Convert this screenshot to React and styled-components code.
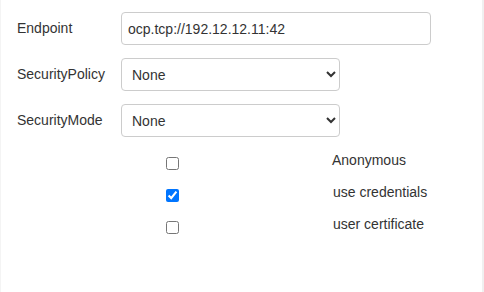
import React, { useState } from 'react'
import styled, { createGlobalStyle } from 'styled-components'

const GlobalStyle = createGlobalStyle`
  html, body {
    margin: 0;
    padding: 0;
    background: #fff;
  }
  * {
    box-sizing: border-box;
  }
`

const Panel = styled.div`
  width: 484px;
  height: 292px;
  padding: 12px 0 0 16px;
  border-left: 1px solid #f4f4f4;
  border-right: 2px solid #f0f0f0;
  font-family: 'Liberation Sans', Arial, sans-serif;
  font-size: 14px;
  color: #333;
  display: flex;
  flex-direction: column;
  gap: 13px;
`

const Row = styled.div`
  display: flex;
  align-items: center;
  height: 33px;
`

const Label = styled.label`
  width: 104px;
  flex-shrink: 0;
  margin-top: -1px;
`

const TextInput = styled.input`
  width: ${(p) => p.$width}px;
  height: 33px;
  padding: 0 6px;
  border: 1px solid #ccc;
  border-radius: 4px;
  font-family: inherit;
  font-size: 14px;
  color: #333;
  outline: none;
`

const Select = styled.select`
  width: ${(p) => p.$width}px;
  height: 33px;
  padding: 0 6px;
  border: 1px solid #ccc;
  border-radius: 4px;
  background: #fff;
  font-family: inherit;
  font-size: 14px;
  color: #333;
  outline: none;
`

const Options = styled.div`
  display: grid;
  grid-template-columns: 166px auto;
  row-gap: 19px;
  padding-left: 149px;
  margin-top: 7px;
`

const Check = styled.input`
  margin: 0;
  width: 13px;
  height: 13px;
  justify-self: start;
`

const CheckLabel = styled.span`
  align-self: start;
  margin-top: -5px;
  padding-left: ${(p) => (p.$shift ? 1 : 0)}px;
`

const options = [
  { id: 'anon', label: 'Anonymous', checked: false },
  { id: 'cred', label: 'use credentials', checked: true, shift: true },
  { id: 'cert', label: 'user certificate', checked: false, shift: true },
]

export default function App() {
  const [endpoint, setEndpoint] = useState('ocp.tcp://192.12.12.11:42')
  const [checks, setChecks] = useState(
    Object.fromEntries(options.map((o) => [o.id, o.checked]))
  )

  return (
    <>
      <GlobalStyle />
      <Panel>
        <Row>
          <Label>Endpoint</Label>
          <TextInput
            $width={310}
            value={endpoint}
            onChange={(e) => setEndpoint(e.target.value)}
          />
        </Row>
        <Row>
          <Label>SecurityPolicy</Label>
          <Select $width={219} defaultValue="None">
            <option>None</option>
            <option>Basic128Rsa15</option>
            <option>Basic256</option>
          </Select>
        </Row>
        <Row>
          <Label>SecurityMode</Label>
          <Select $width={219} defaultValue="None">
            <option>None</option>
            <option>Sign</option>
            <option>SignAndEncrypt</option>
          </Select>
        </Row>
        <Options>
          {options.map((o) => (
            <React.Fragment key={o.id}>
              <Check
                type="checkbox"
                checked={checks[o.id]}
                onChange={() =>
                  setChecks({ ...checks, [o.id]: !checks[o.id] })
                }
              />
              <CheckLabel $shift={o.shift}>{o.label}</CheckLabel>
            </React.Fragment>
          ))}
        </Options>
      </Panel>
    </>
  )
}
